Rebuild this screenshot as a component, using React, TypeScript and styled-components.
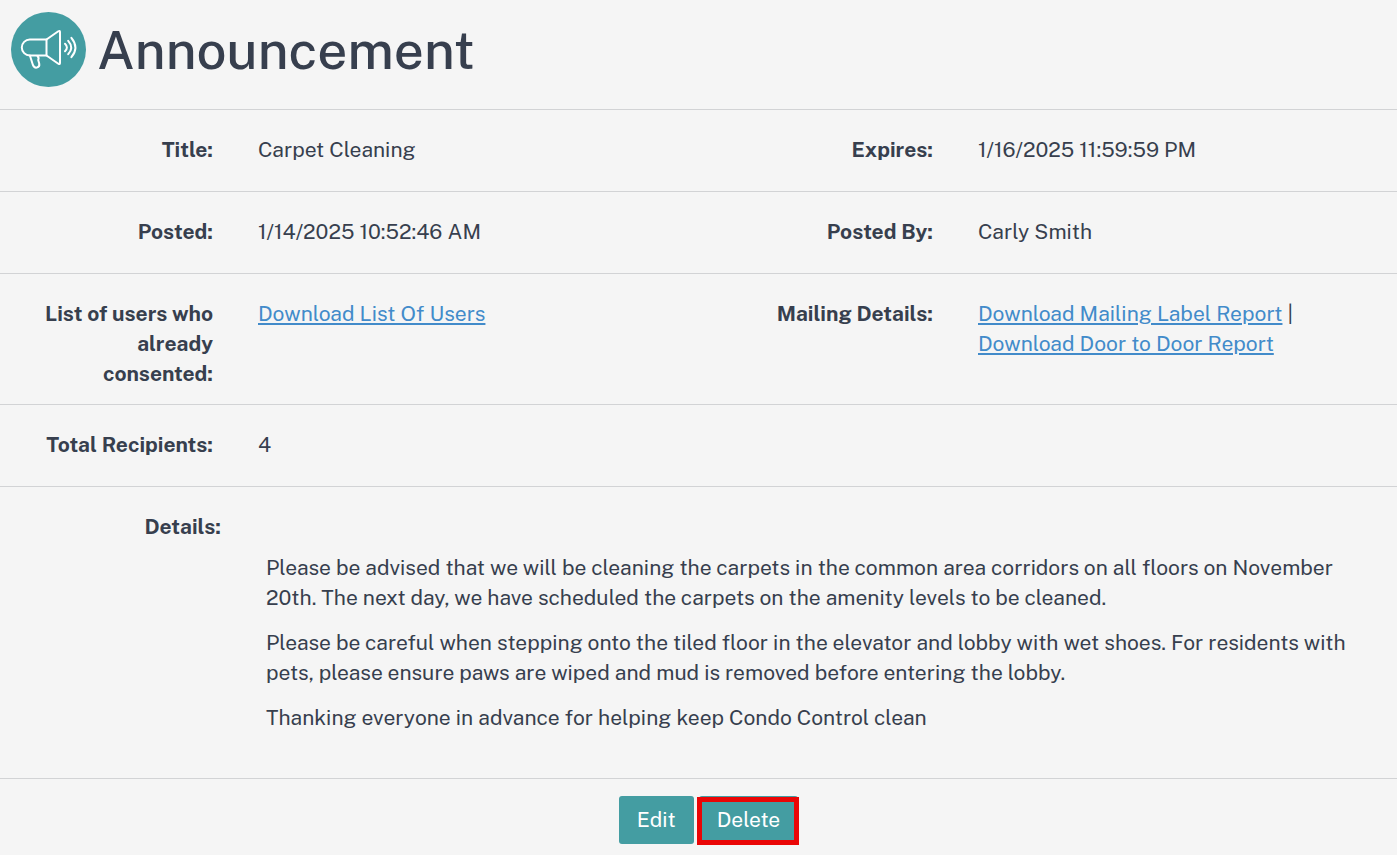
import React from "react";
import styled, { createGlobalStyle } from "styled-components";

const GlobalStyle = createGlobalStyle`
  *, *::before, *::after { box-sizing: border-box; }
  body {
    margin: 0;
    background: #f5f5f5;
    color: #373f4e;
    font-family: "Public Sans", Inter, "Liberation Sans", sans-serif;
    font-size: 21px;
    line-height: 30px;
  }
`;

const Header = styled.header`
  display: flex;
  align-items: center;
  gap: 11px;
  padding: 12px 11px 22px;
`;

const Badge = styled.svg`
  flex: none;
  width: 75px;
  height: 75px;
`;

const Heading = styled.h1`
  margin: 0;
  font-size: 53px;
  line-height: 60px;
  font-weight: 500;
`;

const Fields = styled.dl`
  margin: 0;
`;

const Row = styled.div`
  display: grid;
  grid-template-columns: 183fr 430fr 200fr 397fr;
  column-gap: 45px;
  align-items: start;
  padding: 15px 22px 15px 30px;
  border-top: 1px solid #d2d3d5;
`;

const Field = styled.div`
  display: contents;
`;

const Label = styled.dt`
  padding-top: 10px;
  font-weight: 700;
  text-align: right;
`;

const Value = styled.dd`
  margin: 0;
  padding: 10px 0 11px;
`;

const Link = styled.a`
  color: #428bca;
  text-decoration: underline;
`;

const DetailsRow = styled.div`
  display: grid;
  grid-template-columns: 199fr 1109fr;
  column-gap: 45px;
  padding: 15px 22px 30px;
  border-top: 1px solid #d2d3d5;
`;

const Message = styled.dd`
  margin: 0;
  padding-top: 51px;
`;

const Paragraph = styled.p`
  margin: 0 0 15px;
`;

const Actions = styled.footer`
  display: flex;
  justify-content: center;
  gap: 5px;
  padding: 17px 0 10px 20px;
  border-top: 1px solid #d2d3d5;
`;

const Button = styled.button<{ $outlined?: boolean }>`
  position: relative;
  height: 48px;
  padding: 0 18px;
  border: 0;
  border-radius: 3px;
  background: #449da2;
  color: #fff;
  font: inherit;
  cursor: pointer;
  ${(p) =>
    p.$outlined &&
    `
    &::after {
      content: "";
      position: absolute;
      inset: 1px -1px -1px -2px;
      border: 5px solid #ea0606;
    }
  `}
`;

function Megaphone() {
  return (
    <Badge viewBox="0 0 75 75" aria-hidden="true">
      <circle cx="37.5" cy="37.5" r="37.5" fill="#449da2" />
      <g fill="none" stroke="#fff" strokeWidth="2" strokeLinecap="round" strokeLinejoin="round">
        <path d="M35.5 27.5H18.8a8 8 0 0 0-8 8a8 8 0 0 0 8 8H35.5Z" />
        <path d="M35.5 27.5L47.3 19.3Q49 18.3 49 20V51Q49 52.7 47.3 51.7L35.5 43.5" />
        <path d="M18.9 43.5L22 53.2Q23 56 25.8 55.6Q29 54.8 28.2 51.6L27.2 48Q28.3 46 26.5 44" />
        <path d="M54 31.8Q57.8 35.5 54 39.2" />
        <path d="M57.2 28.8Q63.2 35.5 57.2 42.2" />
        <path d="M60.4 25.8Q68.4 35.5 60.4 45.2" />
      </g>
    </Badge>
  );
}

export default function App() {
  return (
    <>
      <GlobalStyle />
      <Header>
        <Megaphone />
        <Heading>Announcement</Heading>
      </Header>
      <main>
        <Fields>
          <Row>
            <Field>
              <Label>Title:</Label>
              <Value>Carpet Cleaning</Value>
            </Field>
            <Field>
              <Label>Expires:</Label>
              <Value>1/16/2025 11:59:59 PM</Value>
            </Field>
          </Row>
          <Row>
            <Field>
              <Label>Posted:</Label>
              <Value>1/14/2025 10:52:46 AM</Value>
            </Field>
            <Field>
              <Label>Posted By:</Label>
              <Value>Carly Smith</Value>
            </Field>
          </Row>
          <Row>
            <Field>
              <Label>List of users who already consented:</Label>
              <Value>
                <Link href="#users">Download List Of Users</Link>
              </Value>
            </Field>
            <Field>
              <Label>Mailing Details:</Label>
              <Value>
                <Link href="#mailing-labels">Download Mailing Label Report</Link> |{" "}
                <Link href="#door-to-door">Download Door to Door Report</Link>
              </Value>
            </Field>
          </Row>
          <Row>
            <Field>
              <Label>Total Recipients:</Label>
              <Value>4</Value>
            </Field>
          </Row>
          <DetailsRow>
            <Label>Details:</Label>
            <Message>
              <Paragraph>
                Please be advised that we will be cleaning the carpets in the common area corridors on all
                floors on November 20th. The next day, we have scheduled the carpets on the amenity levels to
                be cleaned.
              </Paragraph>
              <Paragraph>
                Please be careful when stepping onto the tiled floor in the elevator and lobby with wet shoes.
                For residents with pets, please ensure paws are wiped and mud is removed before entering the
                lobby.
              </Paragraph>
              <Paragraph>Thanking everyone in advance for helping keep Condo Control clean</Paragraph>
            </Message>
          </DetailsRow>
        </Fields>
      </main>
      <Actions>
        <Button type="button">Edit</Button>
        <Button type="button" $outlined>
          Delete
        </Button>
      </Actions>
    </>
  );
}
